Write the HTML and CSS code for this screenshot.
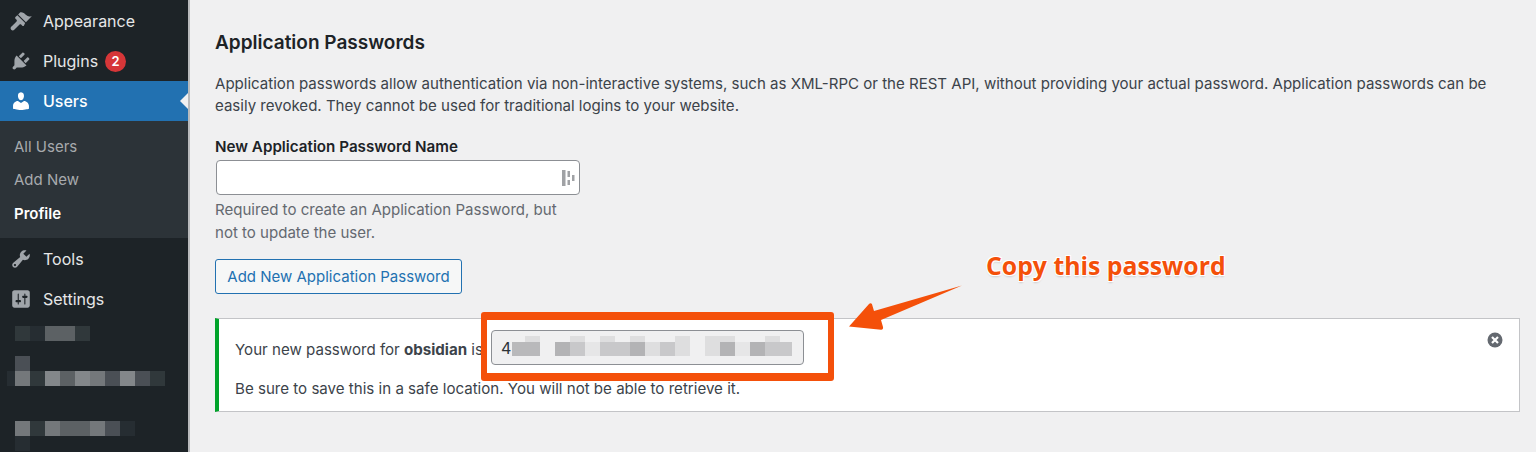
FILE: index.html
```html
<!DOCTYPE html>
<html lang="en">
  <head>
    <meta charset="UTF-8" />
    <meta name="viewport" content="width=device-width, initial-scale=1.0" />
    <title>Profile</title>
    <link rel="stylesheet" href="styles.css">
  </head>
  <body>
    <div class="sidebar">
      <div class="menu-item">
        <svg class="menu-icon" viewBox="0 0 20 20"><path d="M14.480 11.060L7.410 3.990l1.500-1.500c.5-.56 2.300-.47 3.510.32 1.210.8 1.430 1.280 2.910 2.100 1.180.64 2.450 1.260 4.450.85zm-.71.71L6.700 4.700 4.930 6.470c-.39.39-.39 1.020 0 1.410l1.060 1.060c.39.39.39 1.020 0 1.410l-.06.06c-1.100 1.090-3.780 3.770-4.850 4.850-.76.76-.71 1.980.05 2.740.76.76 1.980.81 2.740.05l4.850-4.850c.39-.39 1.020-.39 1.410 0l1.060 1.060c.39.39 1.020.39 1.410 0z" /></svg>
        Appearance
      </div>
      <div class="menu-item">
        <svg class="menu-icon" viewBox="0 0 20 20"><path d="M13.110 4.360L9.870 7.600 8 5.730l3.240-3.240c.35-.34 1.050-.2 1.560.32.52.51.66 1.210.31 1.550zm-8 1.770l.91-1.120 9.010 9.010-1.190.84c-.71.71-2.630 1.160-3.820 1.160H6.140L4.900 17.260c-.59.59-1.540.59-2.120 0-.59-.58-.59-1.530 0-2.120l1.240-1.240v-3.880c0-1.130.4-3.050 1.090-3.890zm7.260 3.970l3.240-3.240c.34-.35 1.040-.21 1.550.31.52.51.66 1.210.31 1.550l-3.240 3.250z" /></svg>
        Plugins <span class="badge">2</span>
      </div>
      <div class="menu-item active">
        <svg class="menu-icon" viewBox="0 0 20 20"><path d="M10 9.250c-2.270 0-2.730-3.440-2.730-3.440C7 4.020 7.820 2 9.970 2c2.160 0 2.980 2.020 2.710 3.810 0 0-.41 3.440-2.680 3.440zm0 2.570L12.720 10c2.390 0 4.520 2.330 4.520 4.530v2.490s-3.650 1.130-7.240 1.130c-3.650 0-7.240-1.130-7.240-1.130v-2.490c0-2.250 1.940-4.480 4.440-4.480z" /></svg>
        Users
      </div>
      <div class="submenu">
        <div class="submenu-item">All Users</div>
        <div class="submenu-item">Add New</div>
        <div class="submenu-item current">Profile</div>
      </div>
      <div class="menu-item lower">
        <svg class="menu-icon" viewBox="0 0 20 20"><path d="M16.680 9.770c-1.340 1.340-3.300 1.670-4.950.99l-5.410 6.520c-.99.99-2.590.99-3.570 0-.99-.98-.99-2.580 0-3.570l6.520-5.420c-.68-1.650-.35-3.610.99-4.950 1.280-1.280 3.120-1.620 4.720-1.060l-2.890 2.890 2.820 2.820 2.860-2.870c.53 1.580.18 3.390-1.090 4.650zM3.810 16.210c.4.39 1.030.39 1.420 0 .4-.4.4-1.030 0-1.420-.39-.39-1.020-.39-1.420 0-.39.39-.39 1.020 0 1.420z" /></svg>
        Tools
      </div>
      <div class="menu-item">
        <svg class="menu-icon" viewBox="0 0 20 20"><path fill-rule="evenodd" d="M18 16V4c0-1.100-.9-2-2-2H4c-1.100 0-2 .9-2 2v12c0 1.100.9 2 2 2h12c1.100 0 2-.9 2-2zM8 11h1c.55 0 1 .45 1 1s-.45 1-1 1H8v1.500c0 .28-.22.5-.5.5s-.5-.22-.5-.5V13H6c-.55 0-1-.45-1-1s.45-1 1-1h1V5.500c0-.28.22-.5.5-.5s.5.22.5.5V11zm5-2h-1c-.55 0-1-.45-1-1s.45-1 1-1h1V5.500c0-.28.22-.5.5-.5s.5.22.5.5V7h1c.55 0 1 .45 1 1s-.45 1-1 1h-1v5.500c0 .28-.22.5-.5.5s-.5-.22-.5-.5V9z" /></svg>
        Settings
      </div>
      <div class="redacted">
        <div class="px-row row-a"><span class="c2"></span><span class="c1"></span><span class="c4 wide"></span><span class="c2"></span></div>
        <div class="px-row row-b"><span class="c3"></span></div>
        <div class="px-row row-c"><span class="c1 half"></span><span class="c5"></span><span class="c2"></span><span class="c6"></span><span class="c4"></span><span class="c6"></span><span class="c5"></span><span class="c3"></span><span class="c6"></span><span class="c3"></span><span class="c2"></span></div>
        <div class="px-row row-d"><span class="c5"></span><span class="c2"></span><span class="c5"></span><span class="c4 wide"></span><span class="c5"></span><span class="c3"></span><span class="c1"></span></div>
        <div class="px-row row-e"><span class="c1"></span></div>
      </div>
    </div>

    <div class="content">
      <h2>Application Passwords</h2>
      <p class="intro">Application passwords allow authentication via non-interactive systems, such as XML-RPC or the REST API, without providing your actual password. Application passwords can be easily revoked. They cannot be used for traditional logins to your website.</p>

      <label class="field-label">New Application Password Name</label>
      <div class="name-input">
        <svg class="input-icon" viewBox="0 0 14 18"><path d="M1 1h3.500v16H1zM6.500 2H9v6H6.500zM6.500 11H9v5H6.500zM11 6h2.500v6H11z" /></svg>
      </div>
      <p class="hint">Required to create an Application Password, but<br />not to update the user.</p>
      <button class="add-btn" type="button">Add New Application Password</button>

      <div class="notice">
        <p class="notice-line">Your new password for <strong>obsidian</strong> is</p>
        <p class="notice-line save">Be sure to save this in a safe location. You will not be able to retrieve it.</p>
        <svg class="dismiss" viewBox="0 0 16 16"><circle cx="8" cy="8" r="7.500" /><path d="M5 5l6 6M11 5l-6 6" /></svg>
        <div class="callout">
          <div class="new-password">
            <span class="first-char">4</span>
            <div class="pw-blocks">
              <div class="pw-row top"><span class="first"></span><span class="p4"></span><span></span><span></span><span class="p4"></span><span></span><span class="p4"></span><span></span><span class="p4"></span><span></span><span></span><span class="p4"></span><span></span><span class="p4"></span><span class="p4"></span><span></span><span></span><span class="p4"></span></div>
              <div class="pw-row"><span class="p1 first"></span><span class="p1"></span><span></span><span class="p2"></span><span class="p3"></span><span class="p5"></span><span class="p3"></span><span class="p3"></span><span class="p2"></span><span class="p4"></span><span class="p3"></span><span class="p4"></span><span></span><span class="p4"></span><span class="p2"></span><span class="p5"></span><span class="p2"></span><span class="p3"></span><span class="p3 last"></span></div>
            </div>
          </div>
        </div>
      </div>

      <svg class="arrow" viewBox="0 0 120 60"><path d="M1 46.500L21 24c1-1.200 2.500-1 3 .3L26 31 114 5.500 33 40l2 7c.4 1.500-.5 3-2 2.800z" /></svg>
      <div class="copy-label">Copy this password</div>
    </div>
  </body>
</html>
```

FILE: styles.css
```css
body {
  margin: 0;
  padding: 0;
  font-family: Inter, "Liberation Sans", Arial, sans-serif;
  display: flex;
  height: 452px;
  overflow: hidden;
  background-color: #f0f0f1;
  color: #3c434a;
}

/* sidebar */
.sidebar {
  width: 188px;
  height: 452px;
  flex-shrink: 0;
  background-color: #1d2327;
  border-right: 2px solid #b9babc;
  padding-top: 1px;
  box-sizing: content-box;
  overflow: hidden;
}
.menu-item {
  height: 40px;
  display: flex;
  align-items: center;
  padding-left: 43px;
  font-size: 16px;
  color: #e6e7e8;
  position: relative;
}
.menu-item.lower {
  margin-top: 1px;
}
.menu-icon {
  position: absolute;
  left: 10px;
  top: 9px;
  width: 22px;
  height: 22px;
  fill: #a0a5aa;
}
.badge {
  width: 21px;
  height: 21px;
  border-radius: 50%;
  background-color: #d63638;
  color: #fff;
  font-size: 13px;
  font-weight: 600;
  display: flex;
  align-items: center;
  justify-content: center;
  margin-left: 7px;
}
.menu-item.active {
  background-color: #2271b1;
  color: #fff;
  font-weight: 500;
}
.menu-item.active .menu-icon {
  fill: #fff;
}
.menu-item.active::after {
  content: "";
  position: absolute;
  right: 0;
  top: 12px;
  border: 8px solid transparent;
  border-right-color: #f0f0f1;
  border-left-width: 0;
}
.submenu {
  background-color: #2c3338;
  height: 117px;
  padding-top: 9px;
  box-sizing: border-box;
}
.submenu-item {
  height: 33.300px;
  display: flex;
  align-items: center;
  padding-left: 14px;
  font-size: 15px;
  color: #a7aaad;
}
.submenu-item.current {
  color: #fff;
  font-weight: 600;
}

/* pixelated names under the menu */
.redacted {
  padding-top: 7px;
}
.px-row {
  display: flex;
  height: 15px;
  padding-left: 15px;
}
.px-row span {
  width: 15px;
}
.px-row span.wide {
  width: 30px;
}
.px-row span.half {
  width: 8px;
  margin-left: -8px;
}
.row-b {
  margin-top: 15px;
}
.row-d {
  margin-top: 35px;
}
.c1 {
  background-color: #262d32;
}
.c2 {
  background-color: #30383b;
}
.c3 {
  background-color: #4a4f55;
}
.c4 {
  background-color: #5c6164;
}
.c5 {
  background-color: #74787b;
}
.c6 {
  background-color: #83878a;
}

/* main column */
.content {
  flex: 1;
  position: relative;
  padding: 0 16px 0 25px;
}
h2 {
  margin: 32px 0 0;
  font-size: 19px;
  line-height: 22px;
  font-weight: 600;
  color: #1d2327;
}
.intro {
  margin: 19px 0 0;
  font-size: 15.050px;
  line-height: 22px;
}
.field-label {
  display: block;
  margin-top: 19px;
  font-size: 15.200px;
  line-height: 21px;
  font-weight: 600;
  color: #1d2327;
}
.name-input {
  width: 358px;
  height: 33px;
  margin: 3px 0 0 1px;
  background-color: #fff;
  border: 1px solid #8c8f94;
  border-radius: 4px;
  display: flex;
  align-items: center;
  justify-content: flex-end;
  padding-right: 4px;
  box-sizing: content-box;
}
.input-icon {
  width: 14px;
  height: 18px;
  fill: #a0a2a5;
}
.hint {
  margin: 3px 0 0;
  font-size: 15.050px;
  line-height: 23px;
  color: #646970;
}
.add-btn {
  display: block;
  margin-top: 15px;
  width: 247px;
  height: 35px;
  padding: 0;
  font-family: inherit;
  font-size: 15px;
  color: #2271b1;
  background-color: #f6f7f7;
  border: 1px solid #2271b1;
  border-radius: 3px;
}

/* success notice */
.notice {
  position: relative;
  height: 92px;
  margin-top: 24px;
  background-color: #fff;
  border: 1px solid #c3c4c7;
  border-left: 4px solid #00a32a;
  box-sizing: content-box;
}
.notice-line {
  margin: 20px 0 0 16px;
  font-size: 15.100px;
  line-height: 21px;
}
.notice-line.save {
  margin-top: 18px;
}
.dismiss {
  position: absolute;
  right: 16px;
  top: 13px;
  width: 16px;
  height: 16px;
  fill: #646970;
  stroke: #fff;
  stroke-width: 2.200px;
}
.dismiss circle {
  stroke: none;
}

/* orange highlight, sits over the notice */
.callout {
  position: absolute;
  left: 262px;
  top: -7px;
  width: 353px;
  height: 69px;
  box-sizing: border-box;
  border: solid #f4500a;
  border-width: 8px 6px;
  border-radius: 3px;
  background-color: #fff;
  padding: 10px 0 0 4px;
}
.new-password {
  width: 313px;
  height: 35px;
  box-sizing: border-box;
  background-color: #f0f0f1;
  border: 1px solid #8c8f94;
  border-radius: 4px;
  display: flex;
  align-items: center;
  padding-left: 9px;
  font-size: 16px;
  color: #2c3338;
  position: relative;
}
.first-char {
  width: 11px;
}
.pw-blocks {
  position: absolute;
  left: 20px;
  top: 5px;
}
.pw-row {
  display: flex;
  height: 14px;
}
.pw-row.top {
  height: 6px;
}
.pw-row span {
  width: 15px;
}
.pw-row span.first {
  width: 13px;
}
.pw-row span.last {
  width: 12px;
}
.p1 {
  background-color: #b9b9bb;
}
.p2 {
  background-color: #b3b3b5;
}
.p3 {
  background-color: #c8c8ca;
}
.p4 {
  background-color: #dededf;
}
.p5 {
  background-color: #e6e6e7;
}

/* annotation */
.arrow {
  position: absolute;
  left: 658px;
  top: 280px;
  width: 120px;
  height: 60px;
  fill: #f4500a;
}
.copy-label {
  position: absolute;
  left: 796px;
  top: 248px;
  font-family: "Open Sans", "Noto Sans", sans-serif;
  font-size: 24.800px;
  line-height: 34px;
  font-weight: 700;
  color: #f4500a;
  white-space: nowrap;
  text-shadow: 1px 1px 0 #fff, -1px -1px 0 #fff, 1px -1px 0 #fff, -1px 1px 0 #fff, 0 2px 2px rgba(0, 0, 0, 0.15);
}
```
